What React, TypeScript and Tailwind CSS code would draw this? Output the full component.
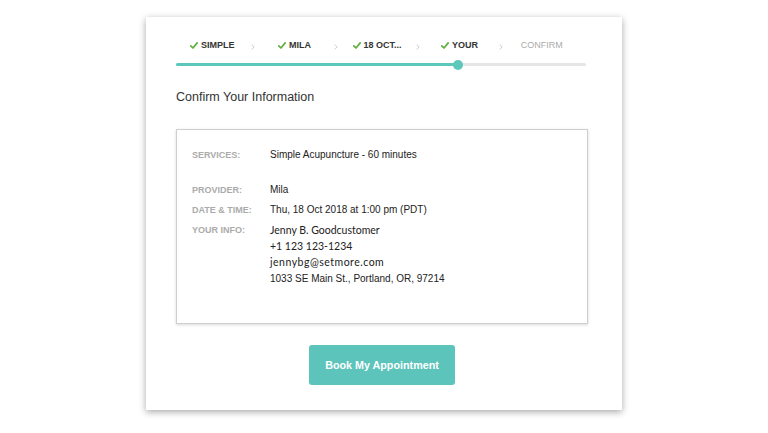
import React from "react";

const Check = () => (
  <svg width="8" height="7" viewBox="0 0 8 7" className="mr-[3px] shrink-0">
    <path d="M0.8 3.8 L3 6 L7.2 0.9" fill="none" stroke="#5fae3e" strokeWidth="1.7" strokeLinecap="round" strokeLinejoin="round" />
  </svg>
);

const Chevron = () => (
  <div className="w-[10px] flex justify-center pt-[3px]">
    <svg width="4" height="6" viewBox="0 0 4 6">
      <path d="M0.6 0.6 L3.2 3 L0.6 5.4" fill="none" stroke="#cfcfcf" strokeWidth="1" />
    </svg>
  </div>
);

const Step = ({ label, done }: { label: string; done?: boolean }) => (
  <div className="flex-1 flex items-center justify-center">
    {done && <Check />}
    <span className={done ? "text-[9px] font-bold text-[#333]" : "text-[9px] text-[#ababab]"}>{label}</span>
  </div>
);

export default function App() {
  const font = { fontFamily: '"Liberation Sans", Arial, sans-serif' };
  const lato = { fontFamily: "Lato, sans-serif" };
  return (
    <div className="w-[768px] h-[433px] bg-white flex justify-center pt-[17px]" style={font}>
      <div className="w-[476px] h-[393px] bg-white shadow-[0_2px_7px_rgba(0,0,0,0.35)] pl-[30px] pr-[34px] pt-[21px]">
        <div className="flex items-center h-[14px] w-[402px] leading-[14px]">
          <Step label="SIMPLE" done />
          <Chevron />
          <Step label="MILA" done />
          <Chevron />
          <Step label="18 OCT..." done />
          <Chevron />
          <Step label="YOUR" done />
          <Chevron />
          <Step label="CONFIRM" />
        </div>
        <div className="mt-[11px] w-[410px] h-[3px] bg-[#e6e6e6] rounded-full flex items-center">
          <div className="w-[282px] h-[3px] bg-[#5cc8bc] rounded-full" />
          <div className="w-[10px] h-[10px] rounded-full bg-[#5cc8bc] -ml-[5px]" />
        </div>
        <div className="mt-[23px] text-[12.5px] leading-[16px] text-[#333]">Confirm Your Information</div>
        <div className="mt-[24px] w-[412px] h-[195px] border border-[#cfcfcf] shadow-[0_1px_3px_rgba(0,0,0,0.15)] pl-[15px] pt-[15px] text-[10px] text-[#222]">
          <div className="flex leading-[20px]">
            <div className="w-[78px] text-[9px] font-bold text-[#ababab]">SERVICES:</div>
            <div>Simple Acupuncture - 60 minutes</div>
          </div>
          <div className="flex leading-[20px] mt-[15px]">
            <div className="w-[78px] text-[9px] font-bold text-[#ababab]">PROVIDER:</div>
            <div>Mila</div>
          </div>
          <div className="flex leading-[20px]">
            <div className="w-[78px] text-[9px] font-bold text-[#ababab]">DATE &amp; TIME:</div>
            <div>Thu, 18 Oct 2018 at 1:00 pm (PDT)</div>
          </div>
          <div className="flex">
            <div className="w-[78px] text-[9px] font-bold text-[#ababab] leading-[20px]">YOUR INFO:</div>
            <div className="pt-[2px] leading-[16px]">
              <div style={lato} className="text-[10.5px]">Jenny B. Goodcustomer</div>
              <div style={lato} className="text-[10.5px]">+1 123 123-1234</div>
              <div style={lato} className="text-[10.5px] tracking-[0.5px]">jennybg@setmore.com</div>
              <div className="mt-[1px]">1033 SE Main St., Portland, OR, 97214</div>
            </div>
          </div>
        </div>
        <div className="mt-[21px] w-[412px] flex justify-center">
          <div className="w-[146px] h-[40px] rounded-[3px] bg-[#5cc4bb] text-white font-bold text-[10.75px] flex items-center justify-center">
            Book My Appointment
          </div>
        </div>
      </div>
    </div>
  );
}
